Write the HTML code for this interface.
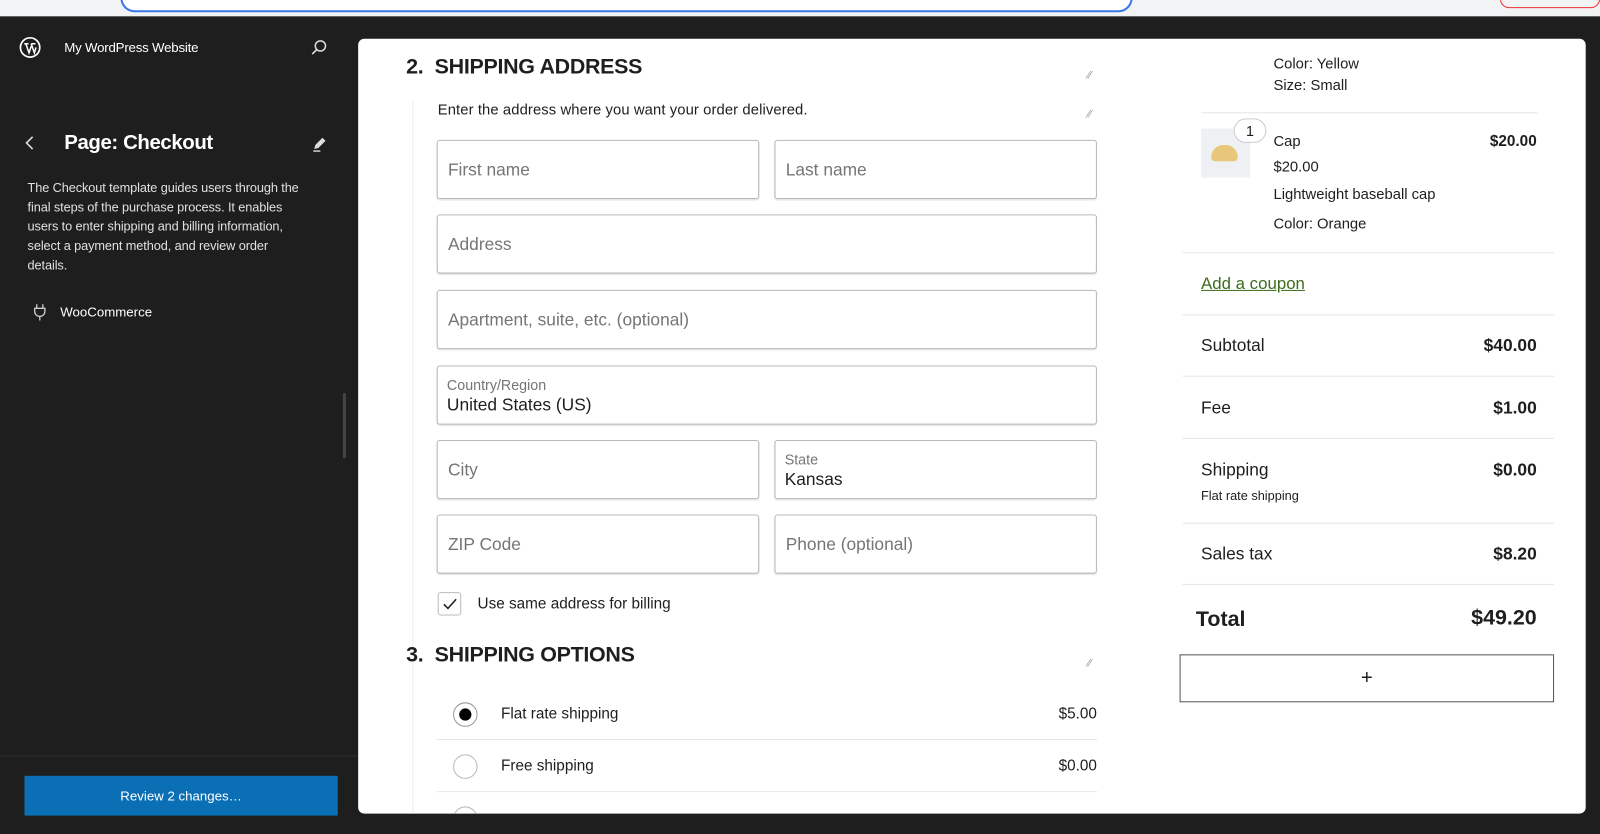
<!DOCTYPE html>
<html><head><style>
*{box-sizing:border-box;margin:0;padding:0}
body{width:1600px;height:834px;overflow:hidden;background:#1e1e1e;font-family:"Liberation Sans",sans-serif}
#w{position:absolute;left:0;top:0;width:1568px;height:817px;transform:scale(1.0204,1.0208);transform-origin:0 0;background:#1e1e1e}
.a{position:absolute}
.inp{position:absolute;border:1px solid #b8b8b8;border-radius:3px;background:#fff;box-shadow:0 1px 1px rgba(0,0,0,.1)}
.ph{position:absolute;left:10px;top:19px;font-size:17px;color:#757575}
.lbl{position:absolute;left:9px;top:10px;font-size:14px;color:#757575}
.val{position:absolute;left:9px;top:28px;font-size:17px;color:#1e1e1e}
.t{color:#1e1e1e}
.r{position:absolute;right:48px;color:#1e1e1e;font-weight:bold;font-size:17px}
.hr{position:absolute;height:1px;background:#e6e6e6}
</style></head><body><div id="w">
<div class="a" style="left:0;top:0;width:1568px;height:16px;background:#f1f3f4"></div>
<div class="a" style="left:118px;top:-20px;width:992px;height:32px;border:2px solid #3b78e7;border-radius:14px;background:#fff"></div>
<div class="a" style="left:1470px;top:-10px;width:98px;height:18px;border:1px solid #e33;border-radius:9px"></div>
<svg class="a" style="left:19px;top:36px" width="21" height="21" viewBox="0 0 20 20"><circle cx="10" cy="10" r="9" fill="none" stroke="#fff" stroke-width="1.6"/><path d="M4.5 6.5h4M11 6.5h4M6 6.5l3 8.5 2-6M11 6.5l3 8.5 1.5-5" stroke="#fff" stroke-width="1.4" fill="none"/></svg>
<div class="a" style="left:63px;top:39px;font-size:13px;color:#fff;letter-spacing:-0.2px">My WordPress Website</div>
<svg class="a" style="left:304px;top:38px" width="18" height="18" viewBox="0 0 18 18"><circle cx="10" cy="7" r="5" fill="none" stroke="#ddd" stroke-width="1.5"/><path d="M6.5 10.5L2 15" stroke="#ddd" stroke-width="1.6"/></svg>
<svg class="a" style="left:22px;top:132px" width="14" height="16"><path d="M10 2L4 8l6 6" stroke="#ddd" stroke-width="1.6" fill="none"/></svg>
<div class="a" style="left:63px;top:129px;font-size:20px;font-weight:bold;color:#fff;letter-spacing:-0.4px">Page: Checkout</div>
<svg class="a" style="left:304px;top:132px" width="18" height="18"><path d="M4 14l1-4 7-7 3 3-7 7z" fill="#ddd"/><path d="M3 16h7" stroke="#ddd" stroke-width="1.4"/></svg>
<div class="a" style="left:27px;top:175px;width:320px;font-size:12.5px;line-height:19px;color:#e0e0e0;letter-spacing:-0.1px">The Checkout template guides users through the<br>final steps of the purchase process. It enables<br>users to enter shipping and billing information,<br>select a payment method, and review order<br>details.</div>
<svg class="a" style="left:32px;top:297px" width="14" height="18"><path d="M4 1v4M10 1v4M2 5h10v3a5 5 0 0 1-10 0zM7 13v4" stroke="#ccc" stroke-width="1.3" fill="none"/></svg>
<div class="a" style="left:59px;top:298px;font-size:13px;color:#fff">WooCommerce</div>
<div class="a" style="left:336px;top:385px;width:3px;height:64px;background:#444;border-radius:2px"></div>
<div class="a" style="left:0;top:740px;width:351px;height:1px;background:#2f2f2f"></div>
<div class="a" style="left:24px;top:760px;width:307px;height:39px;background:#0a6fb4;color:#fff;font-size:13px;text-align:center;line-height:39px">Review 2 changes…</div>
<div class="a" style="left:351px;top:38px;width:1203px;height:759px;background:#fff;border-radius:6px;overflow:hidden">
<div class="a t" style="left:47px;top:16px;font-size:21px;font-weight:bold;letter-spacing:-0.3px">2.&nbsp; SHIPPING ADDRESS</div>
<div class="a" style="left:53px;top:60px;width:1px;height:700px;background:#eee"></div>
<div class="a" style="left:715px;top:30px;color:#999;font-size:11px">⁄⁄</div>
<div class="a" style="left:715px;top:68px;color:#999;font-size:11px">⁄⁄</div>
<div class="a t" style="left:78px;top:62px;font-size:14.5px;letter-spacing:0.1px">Enter the address where you want your order delivered.</div>
<div class="inp" style="left:77px;top:99px;width:316px;height:58px"><span class="ph">First name</span></div>
<div class="inp" style="left:408px;top:99px;width:316px;height:58px"><span class="ph">Last name</span></div>
<div class="inp" style="left:77px;top:172px;width:647px;height:58px"><span class="ph">Address</span></div>
<div class="inp" style="left:77px;top:246px;width:647px;height:58px"><span class="ph">Apartment, suite, etc. (optional)</span></div>
<div class="inp" style="left:77px;top:320px;width:647px;height:58px"><span class="lbl">Country/Region</span><span class="val">United States (US)</span></div>
<div class="inp" style="left:77px;top:393px;width:316px;height:58px"><span class="ph">City</span></div>
<div class="inp" style="left:408px;top:393px;width:316px;height:58px"><span class="lbl">State</span><span class="val">Kansas</span></div>
<div class="inp" style="left:77px;top:466px;width:316px;height:58px"><span class="ph">ZIP Code</span></div>
<div class="inp" style="left:408px;top:466px;width:316px;height:58px"><span class="ph">Phone (optional)</span></div>
<div class="a" style="left:78px;top:542px;width:23px;height:23px;border:1px solid #bbb;border-radius:3px"></div>
<svg class="a" style="left:82px;top:546px" width="16" height="16"><path d="M2 8l4 4 8-9" stroke="#1e1e1e" stroke-width="1.5" fill="none"/></svg>
<div class="a t" style="left:117px;top:545px;font-size:15px">Use same address for billing</div>
<div class="a t" style="left:47px;top:592px;font-size:21px;font-weight:bold;letter-spacing:-0.3px">3.&nbsp; SHIPPING OPTIONS</div>
<div class="a" style="left:715px;top:606px;color:#999;font-size:11px">⁄⁄</div>
<div class="a" style="left:93px;top:650px;width:24px;height:24px;border:1px solid #999;border-radius:50%"></div>
<div class="a" style="left:99px;top:656px;width:12px;height:12px;background:#000;border-radius:50%"></div>
<div class="a t" style="left:140px;top:653px;font-size:15px">Flat rate shipping</div>
<div class="a t" style="right:479px;top:653px;font-size:15px">$5.00</div>
<div class="hr" style="left:77px;top:686px;width:647px"></div>
<div class="a" style="left:93px;top:701px;width:24px;height:24px;border:1px solid #bbb;border-radius:50%"></div>
<div class="a t" style="left:140px;top:704px;font-size:15px">Free shipping</div>
<div class="a t" style="right:479px;top:704px;font-size:15px">$0.00</div>
<div class="hr" style="left:77px;top:737px;width:647px"></div>
<div class="a" style="left:93px;top:752px;width:24px;height:24px;border:1px solid #bbb;border-radius:50%"></div>
<div class="a t" style="left:897px;top:15px;font-size:14.5px;line-height:21px">Color: Yellow<br>Size: Small</div>
<div class="hr" style="left:826px;top:72px;width:330px"></div>
<div class="a" style="left:826px;top:88px;width:48px;height:48px;background:#eef0f3"></div>
<div class="a" style="left:836px;top:104px;width:26px;height:16px;background:#e8c77a;border-radius:12px 12px 4px 4px"></div>
<div class="a t" style="left:858px;top:78px;width:32px;height:24px;border-radius:12px;background:#fff;border:1px solid #ccc;text-align:center;font-size:14px;line-height:22px">1</div>
<div class="a t" style="left:897px;top:93px;font-size:14.5px">Cap</div>
<div class="r" style="top:92px;font-size:15px">$20.00</div>
<div class="a t" style="left:897px;top:118px;font-size:14.5px">$20.00</div>
<div class="a t" style="left:897px;top:145px;font-size:14.5px">Lightweight baseball cap</div>
<div class="a t" style="left:897px;top:174px;font-size:14.5px">Color: Orange</div>
<div class="hr" style="left:808px;top:209px;width:364px"></div>
<div class="a" style="left:826px;top:231px;font-size:16.5px;color:#3c6c1e;text-decoration:underline">Add a coupon</div>
<div class="hr" style="left:808px;top:270px;width:364px"></div>
<div class="a t" style="left:826px;top:291px;font-size:17px">Subtotal</div>
<div class="r" style="top:291px">$40.00</div>
<div class="hr" style="left:808px;top:330px;width:364px"></div>
<div class="a t" style="left:826px;top:352px;font-size:17px">Fee</div>
<div class="r" style="top:352px">$1.00</div>
<div class="hr" style="left:808px;top:391px;width:364px"></div>
<div class="a t" style="left:826px;top:413px;font-size:17px">Shipping</div>
<div class="r" style="top:413px">$0.00</div>
<div class="a t" style="left:826px;top:441px;font-size:12.5px">Flat rate shipping</div>
<div class="hr" style="left:808px;top:474px;width:364px"></div>
<div class="a t" style="left:826px;top:495px;font-size:17px">Sales tax</div>
<div class="r" style="top:495px">$8.20</div>
<div class="hr" style="left:808px;top:534px;width:364px"></div>
<div class="a t" style="left:821px;top:557px;font-size:21px;font-weight:bold">Total</div>
<div class="r" style="top:556px;font-size:21px">$49.20</div>
<div class="a t" style="left:805px;top:603px;width:367px;height:47px;border:1.5px solid #555;text-align:center;font-size:20px;line-height:44px">+</div>
</div>
</div></body></html>
